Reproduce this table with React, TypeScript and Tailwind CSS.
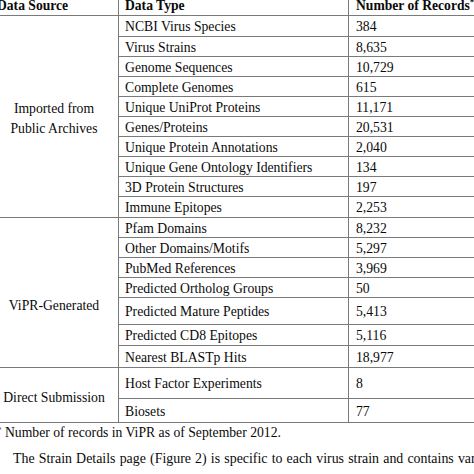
import React from "react";

const rows1 = [
  ["NCBI Virus Species", "384", "h-[21px]"],
  ["Virus Strains", "8,635", "h-[20px]"],
  ["Genome Sequences", "10,729", "h-[20px]"],
  ["Complete Genomes", "615", "h-[20px]"],
  ["Unique UniProt Proteins", "11,171", "h-[20px]"],
  ["Genes/Proteins", "20,531", "h-[20px]"],
  ["Unique Protein Annotations", "2,040", "h-[20px]"],
  ["Unique Gene Ontology Identifiers", "134", "h-[20px]"],
  ["3D Protein Structures", "197", "h-[20px]"],
  ["Immune Epitopes", "2,253", "h-[20px]"],
];
const rows2 = [
  ["Pfam Domains", "8,232", "h-[20px]"],
  ["Other Domains/Motifs", "5,297", "h-[20px]"],
  ["PubMed References", "3,969", "h-[20px]"],
  ["Predicted Ortholog Groups", "50", "h-[20px]"],
  ["Predicted Mature Peptides", "5,413", "h-[27px]"],
  ["Predicted CD8 Epitopes", "5,116", "h-[21px]"],
  ["Nearest BLASTp Hits", "18,977", "h-[21px]"],
];
const rows3 = [
  ["Host Factor Experiments", "8", "h-[31px]"],
  ["Biosets", "77", "h-[23px]"],
];

function Group({ label, rows }: { label: React.ReactNode; rows: string[][] }) {
  return (
    <div className="flex border-b border-[#7a7a7a]">
      <div className="w-[129px] shrink-0 border-r border-[#7a7a7a] flex items-center justify-center text-center leading-[20px]">
        {label}
      </div>
      <div className="flex-1 flex flex-col">
        {rows.map((r, i) => (
          <div
            key={i}
            className={`flex ${r[2]} ${i < rows.length - 1 ? "border-b border-[#7a7a7a]" : ""}`}
          >
            <div className="w-[230px] shrink-0 border-r border-[#7a7a7a] pl-[6px] flex items-center pt-[3px]">
              {r[0]}
            </div>
            <div className="flex-1 pl-[7px] flex items-center pt-[3px]">{r[1]}</div>
          </div>
        ))}
      </div>
    </div>
  );
}

export default function App() {
  return (
    <div
      className="w-[474px] h-[474px] overflow-hidden bg-white text-[#0a0a0a] text-[13.7px]"
      style={{ fontFamily: '"Liberation Serif", "Times New Roman", serif' }}
    >
      <div className="ml-[-10px] mt-[-6px] w-[520px]">
        <div className="flex h-[22px] border-b border-[#7a7a7a] font-bold text-[13.6px]">
          <div className="w-[129px] shrink-0 border-r border-[#7a7a7a] pl-[7px] flex items-center pt-[3px]">
            Data Source
          </div>
          <div className="w-[230px] shrink-0 border-r border-[#7a7a7a] pl-[6px] flex items-center pt-[3px]">
            Data Type
          </div>
          <div className="flex-1 pl-[7px] flex items-center pt-[3px]">
            Number of Records<sup className="text-[9px]">*</sup>
          </div>
        </div>
        <Group
          label={
            <div className="pt-[5px]">
              Imported from
              <br />
              Public Archives
            </div>
          }
          rows={rows1}
        />
        <Group label={<div className="pt-[26px]">ViPR-Generated</div>} rows={rows2} />
        <Group label={<div className="pt-[6px]">Direct Submission</div>} rows={rows3} />
      </div>
      <div className="mt-[1px] ml-[-3px] leading-[18px]">
        <sup className="text-[9px]">*</sup> Number of records in ViPR as of September 2012.
      </div>
      <div className="mt-[7px] ml-[13px] whitespace-nowrap text-[13.9px] [word-spacing:0.7px]">
        The Strain Details page (Figure 2) is specific to each virus strain and contains various
      </div>
    </div>
  );
}
